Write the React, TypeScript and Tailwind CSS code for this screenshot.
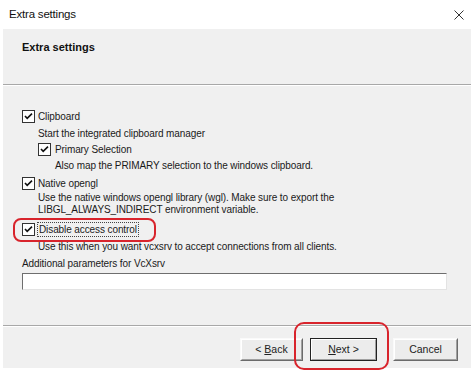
import React from "react";

const UI = { fontFamily: '"Liberation Sans", Arial, sans-serif' };

function Check({ className = "" }: { className?: string }) {
  return (
    <span
      className={`relative inline-flex h-[13px] w-[13px] shrink-0 items-center justify-center border border-[#333] bg-white ${className}`}
    >
      <svg viewBox="0 0 11 11" className="h-[11px] w-[11px]">
        <path d="M2 5 L4.2 7.4 L9 2.6" fill="none" stroke="#111" strokeWidth="1.6" />
      </svg>
    </span>
  );
}

function Btn({ children, main = false }: { children: React.ReactNode; main?: boolean }) {
  return (
    <div
      className={`flex h-[23px] items-center justify-center ${
        main ? "border border-[#222]" : "border border-b-[#6b6b6b] border-r-[#6b6b6b] border-l-[#fafafa] border-t-[#fafafa]"
      }`}
    >
      <div className="flex h-full w-full items-center justify-center border border-b-[#a0a0a0] border-r-[#a0a0a0] border-l-white border-t-white bg-[#ececec] text-[10.5px] text-[#222]">
        <span className="whitespace-pre">{children}</span>
      </div>
    </div>
  );
}

export default function App() {
  return (
    <div className="relative h-[372px] w-[474px] overflow-hidden bg-white text-[#1a1a1a]" style={UI}>
      {/* title bar */}
      <div className="flex h-[29px] items-center justify-between pl-[9px] pr-[10px]">
        <span className="text-[11.5px] tracking-[-0.2px] text-[#111]">Extra settings</span>
        <svg viewBox="0 0 10 10" className="h-[10px] w-[10px]">
          <path d="M0.5 0.5 L9.5 9.5 M9.5 0.5 L0.5 9.5" stroke="#333" strokeWidth="1" />
        </svg>
      </div>

      <div className="ml-[3px] w-[468px] bg-[#f0f0f0]">
        {/* header */}
        <div className="h-[55px] pl-[19px] pt-[10px]">
          <div className="text-[11px] font-bold text-[#111]">Extra settings</div>
        </div>
        <div className="h-px bg-[#a8a8a8]" />
        <div className="h-px bg-white" />

        {/* body */}
        <div className="h-[239px] pl-[19px] pt-[24px] text-[10px] leading-[13px] tracking-[-0.1px]">
          <div className="flex items-center gap-[3px]">
            <Check />
            <span>Clipboard</span>
          </div>
          <div className="mt-[4px] pl-[16px]">Start the integrated clipboard manager</div>
          <div className="mt-[3px] flex items-center gap-[4px] pl-[16px]">
            <Check />
            <span>Primary Selection</span>
          </div>
          <div className="mt-[3px] pl-[33px]">Also map the PRIMARY selection to the windows clipboard.</div>

          <div className="mt-[5px] flex items-center gap-[3px]">
            <Check />
            <span>Native opengl</span>
          </div>
          <div className="mt-[2px] pl-[16px] leading-[12px]">
            Use the native windows opengl library (wgl). Make sure to export the
            <br />
            LIBGL_ALWAYS_INDIRECT environment variable.
          </div>

          <div className="mt-[6px] flex items-center gap-[2px]">
            <Check />
            <span className="border border-dotted border-[#444] px-px">Disable access control</span>
          </div>
          <div className="mt-[3px] pl-[16px]">Use this when you want vcxsrv to accept connections from all clients.</div>

          <div className="mt-[4px]">Additional parameters for VcXsrv</div>
          <div className="mt-[3px] h-[17px] w-[425px] border border-b-[#e3e3e3] border-l-[#6e6e6e] border-r-[#e3e3e3] border-t-[#6e6e6e] bg-white" />
        </div>

        <div className="h-px bg-[#a8a8a8]" />
        <div className="h-px bg-white" />

        {/* buttons */}
        <div className="flex h-[41px] items-start gap-[7px] pl-[237px] pt-[11px]">
          <div className="w-[63px]">
            <Btn>
              {"< "}
              <span className="underline">B</span>ack
            </Btn>
          </div>
          <div className="w-[67px]">
            <Btn main>
              <span className="underline">N</span>ext {">"}
            </Btn>
          </div>
          <div className="ml-[9px] w-[65px]">
            <Btn>Cancel</Btn>
          </div>
        </div>
      </div>

      {/* red annotations */}
      <div className="absolute left-[13px] top-[218px] h-[24px] w-[143px] rounded-[8px] border-2 border-[#d8242c]" />
      <div className="absolute left-[294px] top-[322px] h-[48px] w-[95px] rounded-[10px] border-2 border-[#d8242c]" />
    </div>
  );
}
